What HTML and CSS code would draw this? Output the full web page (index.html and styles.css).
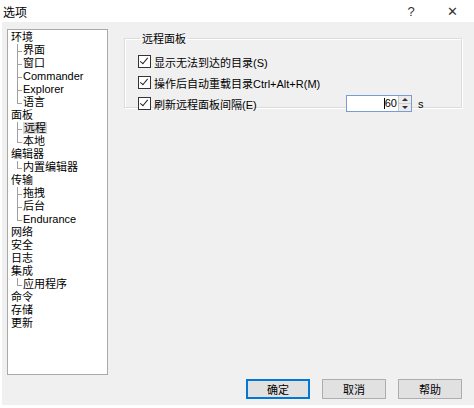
FILE: index.html
```html
<!DOCTYPE html>
<html lang="zh-CN">
<head>
  <meta charset="UTF-8">
  <title>选项</title>
  <link rel="stylesheet" href="styles.css">
</head>
<body>
  <div class="dialog">
    <!-- Title Bar -->
    <div class="titlebar">
      <span class="title">选项</span>
      <span class="tb-btn help">?</span>
      <span class="tb-btn close">&#x2715;</span>
    </div>

    <div class="content">
      <!-- Tree -->
      <div class="tree">
        <div class="node">环境</div>
        <div class="children">
          <div class="leaf">界面</div>
          <div class="leaf">窗口</div>
          <div class="leaf">Commander</div>
          <div class="leaf">Explorer</div>
          <div class="leaf">语言</div>
        </div>
        <div class="node">面板</div>
        <div class="children">
          <div class="leaf"><span class="selected">远程</span></div>
          <div class="leaf">本地</div>
        </div>
        <div class="node">编辑器</div>
        <div class="children">
          <div class="leaf">内置编辑器</div>
        </div>
        <div class="node">传输</div>
        <div class="children">
          <div class="leaf">拖拽</div>
          <div class="leaf">后台</div>
          <div class="leaf">Endurance</div>
        </div>
        <div class="node">网络</div>
        <div class="node">安全</div>
        <div class="node">日志</div>
        <div class="node">集成</div>
        <div class="children">
          <div class="leaf">应用程序</div>
        </div>
        <div class="node">命令</div>
        <div class="node">存储</div>
        <div class="node">更新</div>
      </div>

      <!-- Right Side -->
      <div class="side">
        <fieldset class="group">
          <legend>远程面板</legend>
          <label class="check"><span class="box"></span>显示无法到达的目录(S)</label>
          <label class="check"><span class="box"></span>操作后自动重载目录Ctrl+Alt+R(M)</label>
          <div class="check-row">
            <label class="check wide"><span class="box"></span>刷新远程面板间隔(E)</label>
            <div class="spin">
              <div class="spin-input"><span class="caret"></span>60</div>
              <div class="spin-btns">
                <span class="arrow up"></span>
                <span class="arrow down"></span>
              </div>
            </div>
            <span class="unit">s</span>
          </div>
        </fieldset>

        <div class="buttons">
          <button class="button default">确定</button>
          <button class="button">取消</button>
          <button class="button">帮助</button>
        </div>
      </div>
    </div>
  </div>
</body>
</html>
```

FILE: styles.css
```css
/* General */
body {
  margin: 0;
  background: #ffffff;
  font-family: "Liberation Sans", "Noto Sans CJK SC", sans-serif;
  font-size: 11px;
  color: #000;
}

.dialog {
  width: 474px;
  height: 408px;
  display: flex;
  flex-direction: column;
}

/* Title Bar */
.titlebar {
  height: 22px;
  display: flex;
  align-items: center;
  background: #ffffff;
}

.title {
  margin-left: 3px;
  font-size: 12px;
  flex: 1;
}

.tb-btn {
  font-size: 13px;
  color: #333;
  text-align: center;
}

.help {
  width: 20px;
  margin-right: 21px;
}

.close {
  width: 20px;
  margin-right: 12px;
  font-size: 13px;
}

/* Content */
.content {
  height: 383px;
  background: #f0f0f0;
  display: flex;
  padding: 7px 0 0 7px;
  box-sizing: border-box;
  margin-left: 2px;
}

/* Tree */
.tree {
  width: 99px;
  height: 343px;
  margin-left: -2px;
  background: #ffffff;
  border: 1px solid #a9a9a9;
  padding-top: 1px;
  line-height: 13px;
}

.node {
  padding-left: 3px;
  height: 13px;
}

.leaf {
  position: relative;
  padding-left: 15px;
  height: 13px;
}

.leaf::before {
  content: "";
  position: absolute;
  left: 9px;
  top: 7px;
  width: 5px;
  border-top: 1px solid #a0a0a0;
}

.leaf::after {
  content: "";
  position: absolute;
  left: 9px;
  top: 0;
  height: 13px;
  border-left: 1px solid #a0a0a0;
}

.leaf:last-child::after {
  height: 7px;
}

.selected {
  background: #d9d9d9;
  padding: 0 1px;
}

/* Right Side */
.side {
  flex: 1;
  display: flex;
  flex-direction: column;
  margin-left: 16px;
  margin-right: 12px;
}

.group {
  margin: 1px 0 0 0;
  padding: 5px 0 8px 13px;
  border: 1px solid #dcdcdc;
  box-shadow: inset 1px 1px 0 #ffffff, 1px 1px 0 #ffffff;
  height: 78px;
  box-sizing: border-box;
}

.group legend {
  padding: 0 2px;
  margin-left: 2px;
  font-size: 11px;
}

.check {
  display: flex;
  align-items: center;
  height: 21px;
}

.check.wide {
  width: 208px;
}

.box {
  width: 11px;
  height: 11px;
  border: 1px solid #333;
  background: #fff;
  margin-right: 3px;
  position: relative;
}

.box::after {
  content: "";
  position: absolute;
  left: 3px;
  top: 0px;
  width: 3px;
  height: 7px;
  border-right: 1.5px solid #222;
  border-bottom: 1.5px solid #222;
  transform: rotate(40deg);
}

.check-row {
  display: flex;
  align-items: center;
}

.spin {
  display: flex;
  height: 15px;
  border: 1px solid #7a9cd3;
  background: #fff;
}

.spin-input {
  width: 50px;
  text-align: right;
  line-height: 15px;
  padding-right: 1px;
}

.caret {
  display: inline-block;
  width: 1px;
  height: 11px;
  background: #000;
  vertical-align: -2px;
}

.spin-btns {
  width: 12px;
  display: flex;
  flex-direction: column;
  border-left: 1px solid #c8c8c8;
  background: #ececec;
}

.arrow {
  flex: 1;
  display: flex;
  justify-content: center;
  align-items: center;
}

.arrow::before {
  content: "";
  border-left: 3px solid transparent;
  border-right: 3px solid transparent;
}

.up::before {
  border-bottom: 3px solid #333;
}

.down {
  border-top: 1px solid #d0d0d0;
}

.down::before {
  border-top: 3px solid #333;
}

.unit {
  margin-left: 6px;
}

/* Buttons */
.buttons {
  margin-top: auto;
  margin-bottom: 6px;
  display: flex;
  justify-content: flex-end;
  gap: 12px;
}

.button {
  width: 64px;
  height: 20px;
  font-family: "Noto Sans CJK SC", sans-serif;
  font-size: 11px;
  background: #e1e1e1;
  border: 1px solid #adadad;
  padding: 0;
}

.button.default {
  border: 1px solid #0078d7;
  box-shadow: inset 0 0 0 1px #0078d7;
}
```
